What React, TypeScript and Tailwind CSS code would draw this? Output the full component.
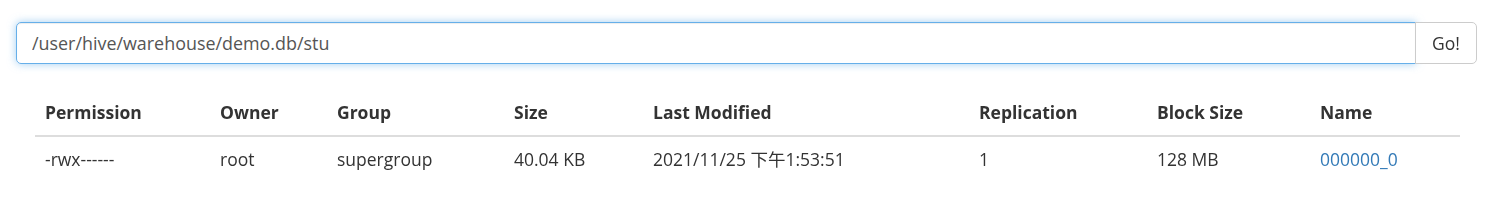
export default function App() {
  const cols = [
    { h: 'Permission', v: '-rwx------', w: 'w-[175px]' },
    { h: 'Owner', v: 'root', w: 'w-[117px]' },
    { h: 'Group', v: 'supergroup', w: 'w-[177px]' },
    { h: 'Size', v: '40.04 KB', w: 'w-[139px]' },
    { h: 'Last Modified', v: '2021/11/25 下午1:53:51', w: 'w-[326px]' },
    { h: 'Replication', v: '1', w: 'w-[178px]' },
    { h: 'Block Size', v: '128 MB', w: 'w-[163px]' },
    { h: 'Name', v: '000000_0', w: 'w-[150px]' },
  ];

  return (
    <div
      className="w-[1497px] h-[206px] bg-white text-[#333] text-[17.5px] leading-[25px]"
      style={{ fontFamily: '"Open Sans", "Noto Sans CJK SC", sans-serif' }}
    >
      <div className="pt-[22px] pl-[16px] pr-[20px] flex">
        <input
          defaultValue="/user/hive/warehouse/demo.db/stu"
          autoFocus
          className="flex-1 h-[42px] px-[15px] text-[17.9px] text-[#555] border border-[#66afe9] rounded-l-[5px] outline-none shadow-[inset_0_1px_1px_rgba(0,0,0,0.075),0_0_8px_rgba(102,175,233,0.6)]"
        />
        <button className="w-[62px] h-[42px] -ml-px border border-[#ccc] rounded-r-[5px] bg-white text-[#333]">
          Go!
        </button>
      </div>

      <table className="ml-[35px] mt-[26px] border-collapse table-fixed w-[1425px]">
        <thead>
          <tr>
            {cols.map((c) => (
              <th
                key={c.h}
                className={`${c.w} text-left font-bold px-[10px] py-[10px] border-b-2 border-[#ddd]`}
              >
                {c.h}
              </th>
            ))}
          </tr>
        </thead>
        <tbody>
          <tr>
            {cols.map((c) => (
              <td key={c.h} className="px-[10px] py-[10px]">
                {c.h === 'Name' ? (
                  <a href="#" className="text-[#337ab7]">
                    {c.v}
                  </a>
                ) : (
                  c.v
                )}
              </td>
            ))}
          </tr>
        </tbody>
      </table>
    </div>
  );
}
